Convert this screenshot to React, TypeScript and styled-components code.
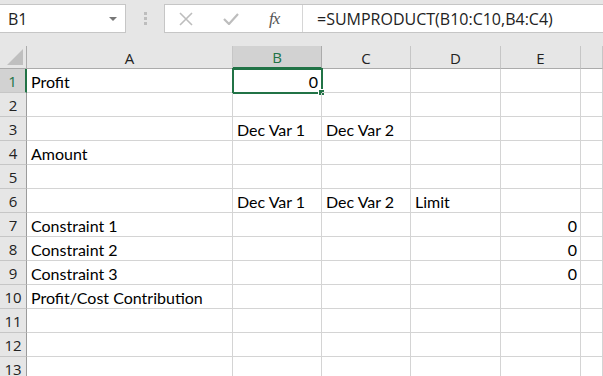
import React from 'react';
import styled, { createGlobalStyle, css } from 'styled-components';

const GREEN = '#217346';
const GRID = '#d4d4d4';

const GlobalStyle = createGlobalStyle`
  html, body {
    margin: 0;
    padding: 0;
    background: #e6e6e6;
    overflow: hidden;
  }
`;

const Page = styled.div`
  width: 603px;
  height: 376px;
  overflow: hidden;
  background: #e6e6e6;
  font-family: 'Open Sans', 'Noto Sans', sans-serif;
`;

const FormulaRow = styled.div`
  display: flex;
  align-items: center;
  height: 46px;
  padding-bottom: 9px;
  box-sizing: border-box;
`;

const NameBox = styled.div`
  display: flex;
  align-items: center;
  justify-content: space-between;
  width: 126px;
  height: 29px;
  box-sizing: border-box;
  padding: 0 8px 0 8px;
  background: #fff;
  border: 1px solid #c6c6c6;
  border-left: none;
  font-size: 16px;
  color: #222;
`;

const Caret = styled.span`
  width: 0;
  height: 0;
  border-left: 4px solid transparent;
  border-right: 4px solid transparent;
  border-top: 4px solid #777;
  margin-top: 1px;
`;

const Grip = styled.div`
  display: flex;
  flex-direction: column;
  gap: 2px;
  width: 38px;
  align-items: center;
  span {
    width: 3px;
    height: 3px;
    background: #bdbdbd;
  }
`;

const FormulaBox = styled.div`
  flex: 1;
  display: flex;
  height: 29px;
  box-sizing: border-box;
  background: #fff;
  border: 1px solid #c6c6c6;
  border-right: none;
`;

const Buttons = styled.div`
  display: flex;
  align-items: center;
  width: 138px;
  padding-left: 14px;
  gap: 30px;
  box-sizing: border-box;
  border-right: 1px solid #d6d6d6;
`;

const Fx = styled.span`
  font-family: 'Liberation Serif', serif;
  font-style: italic;
  font-size: 17px;
  color: #555;
  letter-spacing: -1px;
`;

const Formula = styled.div`
  display: flex;
  align-items: center;
  padding-left: 14px;
  font-size: 16px;
  color: #222;
  white-space: nowrap;
`;

const Sheet = styled.div`
  display: grid;
  grid-template-columns: 27px 206px 89px 89px 90px 80px 1fr;
  grid-template-rows: 23px repeat(13, 24px);
  background: #fff;
`;

const Corner = styled.div`
  position: relative;
  background: #e6e6e6;
  border-right: 1px solid #ababab;
  border-bottom: 1px solid #ababab;
  &::after {
    content: '';
    position: absolute;
    right: 3px;
    bottom: 3px;
    width: 0;
    height: 0;
    border-left: 16px solid transparent;
    border-bottom: 16px solid #bfbfbf;
  }
`;

const ColHead = styled.div<{ active?: boolean }>`
  display: flex;
  align-items: center;
  justify-content: center;
  padding-top: 1px;
  background: #e6e6e6;
  border-right: 1px solid #c6c6c6;
  border-bottom: 1px solid #ababab;
  font-size: 15px;
  color: #222;
  ${({ active }) =>
    active &&
    css`
      background: #d2d2d2;
      color: ${GREEN};
      border-bottom: 2px solid ${GREEN};
      border-right-color: #ababab;
    `}
`;

const RowHead = styled.div<{ active?: boolean }>`
  display: flex;
  align-items: center;
  justify-content: center;
  padding-top: 1px;
  background: #e6e6e6;
  border-right: 1px solid #9b9b9b;
  border-bottom: 1px solid #c6c6c6;
  font-size: 15px;
  color: #222;
  ${({ active }) =>
    active &&
    css`
      background: #d2d2d2;
      color: ${GREEN};
      border-right: 2px solid ${GREEN};
    `}
`;

const Cell = styled.div<{ num?: boolean }>`
  position: relative;
  display: flex;
  align-items: center;
  justify-content: ${({ num }) => (num ? 'flex-end' : 'flex-start')};
  padding: 2px 3px 0 4px;
  border-right: 1px solid ${GRID};
  border-bottom: 1px solid ${GRID};
  font-family: 'Lato', 'Open Sans', sans-serif;
  font-size: 16px;
  color: #000;
  white-space: nowrap;
  overflow: visible;
  min-width: 0;
`;

const Selection = styled.div`
  position: absolute;
  left: -1px;
  top: -1px;
  right: -2px;
  bottom: -2px;
  border: 2px solid ${GREEN};
  pointer-events: none;
  &::after {
    content: '';
    position: absolute;
    right: -4px;
    bottom: -4px;
    width: 5px;
    height: 5px;
    background: ${GREEN};
    border: 1px solid #fff;
  }
`;

const CellText = styled.span`
  position: relative;
  z-index: 1;
`;

const columns = ['A', 'B', 'C', 'D', 'E', ''];

const data: Record<number, (string | number | null)[]> = {
  1: ['Profit', 0, null, null, null, null],
  3: [null, 'Dec Var 1', 'Dec Var 2', null, null, null],
  4: ['Amount', null, null, null, null, null],
  6: [null, 'Dec Var 1', 'Dec Var 2', 'Limit', null, null],
  7: ['Constraint 1', null, null, null, 0, null],
  8: ['Constraint 2', null, null, null, 0, null],
  9: ['Constraint 3', null, null, null, 0, null],
  10: ['Profit/Cost Contribution', null, null, null, null, null],
};

function XIcon() {
  return (
    <svg width="14" height="14" viewBox="0 0 14 14">
      <path d="M1 1 L13 13 M13 1 L1 13" stroke="#bdbdbd" strokeWidth="1.6" fill="none" />
    </svg>
  );
}

function CheckIcon() {
  return (
    <svg width="16" height="12" viewBox="0 0 16 12">
      <path d="M1 6 L6 11 L15 1" stroke="#bdbdbd" strokeWidth="2.2" fill="none" />
    </svg>
  );
}

export default function App() {
  const rows = Array.from({ length: 13 }, (_, i) => i + 1);
  return (
    <Page>
      <GlobalStyle />
      <FormulaRow>
        <NameBox>
          B1
          <Caret />
        </NameBox>
        <Grip>
          <span />
          <span />
          <span />
        </Grip>
        <FormulaBox>
          <Buttons>
            <XIcon />
            <CheckIcon />
            <Fx>fx</Fx>
          </Buttons>
          <Formula>=SUMPRODUCT(B10:C10,B4:C4)</Formula>
        </FormulaBox>
      </FormulaRow>
      <Sheet>
        <Corner />
        {columns.map((c, i) => (
          <ColHead key={i} active={c === 'B'}>
            {c}
          </ColHead>
        ))}
        {rows.map((r) => (
          <React.Fragment key={r}>
            <RowHead active={r === 1}>{r}</RowHead>
            {columns.map((_, ci) => {
              const v = data[r]?.[ci] ?? null;
              const isNum = typeof v === 'number';
              return (
                <Cell key={ci} num={isNum}>
                  {r === 1 && ci === 1 && <Selection />}
                  {v !== null && <CellText>{v}</CellText>}
                </Cell>
              );
            })}
          </React.Fragment>
        ))}
      </Sheet>
    </Page>
  );
}
